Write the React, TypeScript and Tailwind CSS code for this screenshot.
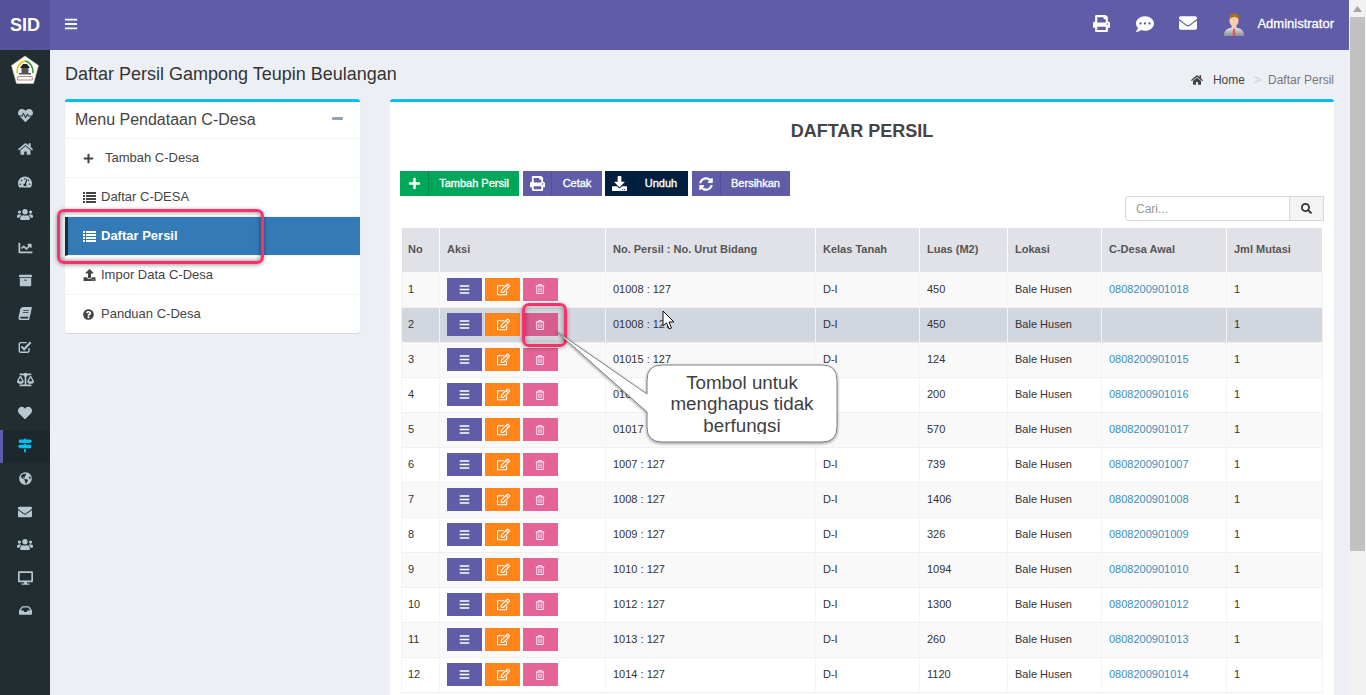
import React from "react";
import {
  FaHeartbeat, FaHome, FaTachometerAlt, FaUsers, FaChartLine, FaArchive, FaBook,
  FaBalanceScale, FaHeart, FaMapSigns, FaGlobeAmericas, FaEnvelope, FaDesktop, FaInbox, FaPlus,
  FaUpload, FaQuestionCircle, FaPrint, FaDownload, FaSyncAlt, FaBars, FaRegEdit, FaRegTrashAlt, FaSearch, FaCommentDots,
} from "react-icons/fa";

function CheckSquare({ className }: { className?: string }) {
  return (
    <svg viewBox="0 0 16 16" className={className}>
      <path d="M12.5 9 V12.5 A1.5 1.5 0 0 1 11 14 H3 A1.5 1.5 0 0 1 1.5 12.5 V4.5 A1.5 1.5 0 0 1 3 3 H10" fill="none" stroke="currentColor" strokeWidth="1.6" />
      <path d="M4 7.5 L7 10.5 L14.5 2.5" fill="none" stroke="currentColor" strokeWidth="2.4" />
    </svg>
  );
}

function ListIcon() {
  return (
    <svg width="13" height="11" viewBox="0 0 13 11" fill="currentColor">
      <rect x="0" y="0" width="2" height="2" /><rect x="3" y="0" width="10" height="2" />
      <rect x="0" y="3" width="2" height="2" /><rect x="3" y="3" width="10" height="2" />
      <rect x="0" y="6" width="2" height="2" /><rect x="3" y="6" width="10" height="2" />
      <rect x="0" y="9" width="2" height="2" /><rect x="3" y="9" width="10" height="2" />
    </svg>
  );
}

const side: { I: React.ComponentType<{ className?: string }>; c: string }[] = [
  { I: FaHeartbeat, c: "h-[15px] w-[15px]" },
  { I: FaHome, c: "h-[14px] w-[15px]" },
  { I: FaTachometerAlt, c: "h-[14px] w-[14px]" },
  { I: FaUsers, c: "h-[15px] w-[16px]" },
  { I: FaChartLine, c: "h-[14px] w-[15px]" },
  { I: FaArchive, c: "h-[13px] w-[13px]" },
  { I: FaBook, c: "h-[13px] w-[12px] -skew-x-12" },
  { I: CheckSquare, c: "h-[14px] w-[14px]" },
  { I: FaBalanceScale, c: "h-[15px] w-[17px]" },
  { I: FaHeart, c: "h-[14px] w-[14px]" },
  { I: FaMapSigns, c: "h-[15px] w-[14px]" },
  { I: FaGlobeAmericas, c: "h-[13px] w-[13px]" },
  { I: FaEnvelope, c: "h-[14px] w-[14px]" },
  { I: FaUsers, c: "h-[15px] w-[16px]" },
  { I: FaDesktop, c: "h-[14px] w-[15px]" },
  { I: FaInbox, c: "h-[13px] w-[13px]" },
];

const rows: [string, string, string, string][] = [
  ["1", "01008 : 127", "450", "0808200901018"],
  ["2", "01008 : 127", "450", ""],
  ["3", "01015 : 127", "124", "0808200901015"],
  ["4", "01016 : 127", "200", "0808200901016"],
  ["5", "01017 : 127", "570", "0808200901017"],
  ["6", "1007 : 127", "739", "0808200901007"],
  ["7", "1008 : 127", "1406", "0808200901008"],
  ["8", "1009 : 127", "326", "0808200901009"],
  ["9", "1010 : 127", "1094", "0808200901010"],
  ["10", "1012 : 127", "1300", "0808200901012"],
  ["11", "1013 : 127", "260", "0808200901013"],
  ["12", "1014 : 127", "1120", "0808200901014"],
];

function Logo() {
  return (
    <svg width="30" height="30" viewBox="0 0 30 30">
      <path d="M15 1 L28.5 10.5 L23.5 28.5 L6.5 28.5 L1.5 10.5 Z" fill="#fff" />
      <path d="M7 18 A9 11 0 0 1 15 6" fill="none" stroke="#e8c416" strokeWidth="1.6" />
      <path d="M23 18 A9 11 0 0 0 15 6" fill="none" stroke="#3a9a3a" strokeWidth="1.6" />
      <path d="M13 9 h4 l3 4 h-10 z" fill="#222" />
      <rect x="11.5" y="13" width="7" height="5" fill="#555" />
      <rect x="9" y="18" width="12" height="1.5" fill="#555" />
      <path d="M8 21.5 L7.5 25 H22.5 L22 21.5 Z" fill="#fff" stroke="#a55" strokeWidth="0.7" />
      <path d="M15 1 L28.5 10.5 L23.5 28.5 L6.5 28.5 L1.5 10.5 Z" fill="none" stroke="#c9c9a0" strokeWidth="0.6" />
    </svg>
  );
}

function Avatar() {
  return (
    <svg width="22" height="26" viewBox="0 0 24 26">
      <defs>
        <linearGradient id="suit" x1="0" y1="0" x2="0" y2="1">
          <stop offset="0" stopColor="#e8e8e8" />
          <stop offset="1" stopColor="#8d8d95" />
        </linearGradient>
      </defs>
      <path d="M1 25 C1 18 6 16 12 15.5 C18 16 23 18 23 25 Z" fill="url(#suit)" />
      <path d="M9 15 L12 19 L15 15 L14 13 H10 Z" fill="#f6cfae" />
      <ellipse cx="12" cy="8" rx="5" ry="6.5" fill="#f6cfae" />
      <path d="M6.5 8 C5.5 1 12 -1 15.5 1 C18 2.5 18 6 17.3 8 C16.5 5 14 4 11 4.5 C8.5 5 7.5 6 6.5 8 Z" fill="#a9701f" />
      <path d="M11 17 H13 L13.7 25 H10.3 Z" fill="#e4556a" />
    </svg>
  );
}

function Cursor() {
  return (
    <svg width="14" height="21" viewBox="0 0 14 21">
      <path d="M1 1 V16 L4.5 12.8 L7 19 L9.5 18 L7 12 H12 Z" fill="#fff" stroke="#111" strokeWidth="1" />
    </svg>
  );
}

function ToolBtn({ icon, label, bg, line, w }: { icon: React.ReactNode; label: string; bg: string; line: string; w: string }) {
  return (
    <div className={`flex h-[25px] items-stretch text-white ${bg} ${w}`}>
      <div className={`flex w-[29px] items-center justify-center border-r ${line}`}>{icon}</div>
      <div className="flex flex-1 items-center justify-center text-[11px] [-webkit-text-stroke:0.35px]">{label}</div>
    </div>
  );
}

function MenuItem({ icon, label, active, last, gap }: { icon: React.ReactNode; label: string; active?: boolean; last?: boolean; gap?: string }) {
  return (
    <div className={`flex items-center ${last ? "h-[38px]" : "h-[39px] border-b border-[#f4f4f4]"} ${active ? "border-l-[3px] border-l-[#1f2b34] bg-[#337ab7] pl-[15px] font-bold text-white" : "pl-[18px] text-[#444]"} ${gap ?? "gap-[5px]"}`}>
      {icon}
      <span>{label}</span>
    </div>
  );
}

export default function App() {
  return (
    <div className="relative flex h-[695px] w-[1366px] overflow-hidden font-['Liberation_Sans',Arial,sans-serif] text-[#333]">
      <div className="flex w-[1349px] shrink-0 flex-col bg-[#ecf0f5]">
        <header className="flex h-[50px] shrink-0 bg-[#605ca8] text-white">
          <div className="flex w-[50px] items-center justify-center bg-[#555299] text-[18px] font-bold">SID</div>
          <div className="flex w-[41px] items-center justify-center pb-[3px]"><FaBars className="h-[14px] w-[14px]" /></div>
          <div className="flex flex-1 items-center justify-end pr-[15px]">
            <FaPrint className="mb-1 h-[17px] w-[17px]" />
            <FaCommentDots className="mb-0.5 ml-[26px] h-[18px] w-[18px]" />
            <FaEnvelope className="mb-1 ml-[25px] h-[18px] w-[18px]" />
            <div className="ml-[26px]"><Avatar /></div>
            <span className="ml-[12px] mb-0.5 text-[13px] [-webkit-text-stroke:0.3px]">Administrator</span>
          </div>
        </header>

        <div className="flex min-h-0 flex-1">
          <aside className="flex w-[50px] shrink-0 flex-col bg-[#222d32] text-[#b8c7ce]">
            <div className="flex h-[50px] shrink-0 items-start justify-center pt-[5px]"><Logo /></div>
            {side.map(({ I, c }, i) => (
              <div key={i} className={`flex h-[33px] shrink-0 items-center justify-center pb-[2px] ${i === 10 ? "border-l-[3px] border-[#605ca8] bg-[#1e282c] pr-[3px] text-[#00c0ef]" : ""}`}>
                <I className={c} />
              </div>
            ))}
          </aside>

          <main className="min-w-0 flex-1 overflow-hidden pl-[15px] pr-[15px]">
            <div className="flex h-[49px] justify-between">
              <h1 className="pt-[13px] text-[18px] leading-[22px] text-[#333]">Daftar Persil Gampong Teupin Beulangan</h1>
              <div className="flex items-start gap-[7px] pt-[23px] text-[12px] leading-[14px]">
                <FaHome className="mr-[3px] mt-[1px] h-[12px] w-[12px] text-[#444]" />
                <span className="text-[#444]">Home</span>
                <span className="pl-[2px] text-[#ccc]">&gt;</span>
                <span className="text-[#777]">Daftar Persil</span>
              </div>
            </div>

            <div className="flex items-start gap-[30px]">
              <section className="w-[295px] shrink-0 rounded-[3px] border-t-[3px] border-[#00c0ef] bg-white text-[13px] shadow-[0_1px_1px_rgba(0,0,0,0.1)]">
                <div className="flex h-[37px] items-center justify-between border-b border-[#f4f4f4] pl-[10px] pr-[17px] text-[16px] text-[#444]">
                  <span>Menu Pendataan C-Desa</span>
                  <div className="mb-[3px] h-[3px] w-[11px] rounded-[1px] bg-[#97a0b3]" />
                </div>
                <MenuItem icon={<FaPlus className="h-[11px] w-[11px] text-[#444]" />} label="Tambah C-Desa" gap="gap-[11px]" />
                <MenuItem icon={<ListIcon />} label="Daftar C-DESA" />
                <MenuItem icon={<ListIcon />} label="Daftar Persil" active />
                <MenuItem icon={<FaUpload className="h-[12px] w-[13px]" />} label="Impor Data C-Desa" />
                <MenuItem icon={<FaQuestionCircle className="h-[11px] w-[11px]" />} label="Panduan C-Desa" last gap="gap-[7px]" />
              </section>

              <section className="h-[600px] min-w-0 flex-1 rounded-t-[3px] border-t-[3px] border-[#00c0ef] bg-white px-[10px]">
                <h2 className="pt-[19px] text-center text-[18px] font-bold leading-[20px] text-[#444]">DAFTAR PERSIL</h2>
                <div className="mt-[30px] flex">
                  <ToolBtn icon={<FaPlus className="h-[13px] w-[13px]" />} label="Tambah Persil" bg="bg-[#00a65a]" line="border-[#008d4c]" w="w-[119px]" />
                  <div className="ml-[4px]"><ToolBtn icon={<FaPrint className="h-[15px] w-[15px]" />} label="Cetak" bg="bg-[#605ca8]" line="border-[#555299]" w="w-[79px]" /></div>
                  <div className="ml-[3px]"><ToolBtn icon={<FaDownload className="h-[15px] w-[15px]" />} label="Unduh" bg="bg-[#001f3f]" line="border-[#001a35]" w="w-[83px]" /></div>
                  <div className="ml-[4px]"><ToolBtn icon={<FaSyncAlt className="h-[14px] w-[14px]" />} label="Bersihkan" bg="bg-[#605ca8]" line="border-[#555299]" w="w-[98px]" /></div>
                </div>
                <div className="flex justify-end">
                  <div className="flex h-[25px] w-[199px]">
                    <div className="flex flex-1 items-center rounded-l-[3px] border border-[#d2d6de] bg-white pl-[10px] text-[12px] text-[#999]">Cari...</div>
                    <div className="flex w-[34px] items-center justify-center border-y border-r border-[#d2d6de] bg-[#f4f4f4] text-[#333]"><FaSearch className="h-[11px] w-[11px]" /></div>
                  </div>
                </div>

                <table className="mt-[7px] ml-[1px] w-[921px] table-fixed border-collapse text-[11px]">
                  <colgroup>
                    <col className="w-[38px]" /><col className="w-[166px]" /><col className="w-[210px]" /><col className="w-[104px]" /><col className="w-[88px]" /><col className="w-[94px]" /><col className="w-[125px]" /><col className="w-[96px]" />
                  </colgroup>
                  <thead>
                    <tr className="h-[44px] bg-[#e1e2e7] text-left font-bold text-[#555] [&>th]:border-x [&>th]:border-white [&>th]:px-[7px] [&>th]:pb-[2px] [&>th:first-child]:pl-[6px]">
                      <th>No</th><th>Aksi</th><th>No. Persil : No. Urut Bidang</th><th>Kelas Tanah</th><th>Luas (M2)</th><th>Lokasi</th><th>C-Desa Awal</th><th>Jml Mutasi</th>
                    </tr>
                  </thead>
                  <tbody>
                    {rows.map((r, i) => (
                      <tr key={r[0]} className={`h-[35px] border-b border-[#f0f0f0] [&>td]:border-x [&>td]:border-[#f4f4f4] [&>td]:px-[7px] [&>td:first-child]:pl-[6px] ${i === 1 ? "bg-[#d2d6de] [&>td]:border-[#eceef2]" : i % 2 === 0 ? "bg-[#f9f9f9]" : "bg-white"}`}>
                        <td>{r[0]}</td>
                        <td>
                          <div className="flex gap-[3px]">
                            <div className="flex h-[23px] w-[35px] items-center justify-center bg-[#605ca8] text-white"><FaBars className="h-[11px] w-[11px]" /></div>
                            <div className="flex h-[23px] w-[35px] items-center justify-center bg-[#ff851b] pl-px text-white"><FaRegEdit className="h-[13px] w-[13px]" /></div>
                            <div className={`flex h-[23px] w-[35px] items-center justify-center pr-px text-white ${i === 1 ? "bg-[#d65d8d]" : "bg-[#e56497]"}`}><FaRegTrashAlt className="h-[10px] w-[10px] opacity-90" /></div>
                          </div>
                        </td>
                        <td>{r[1]}</td>
                        <td>D-I</td>
                        <td>{r[2]}</td>
                        <td>Bale Husen</td>
                        <td className="text-[#3c8dbc]">{r[3]}</td>
                        <td>1</td>
                      </tr>
                    ))}
                  </tbody>
                </table>
              </section>
            </div>
          </main>
        </div>
      </div>

      <div className="flex w-[17px] shrink-0 flex-col bg-[#f1f1f1]">
        <div className="flex h-[17px] items-center justify-center text-[#a3a3a3]">
          <svg width="9" height="6" viewBox="0 0 9 6"><path d="M4.5 0 L9 6 H0 Z" fill="currentColor" /></svg>
        </div>
        <div className="ml-[1px] h-[534px] w-[15px] bg-[#c1c1c1]" />
      </div>

      {/* annotations over the page */}
      <div className="absolute left-[57px] top-[209px] h-[55px] w-[207px] rounded-[7px] border-[3px] border-[#f9306b] shadow-[0_1px_4px_rgba(0,0,0,0.4),inset_0_0_5px_rgba(0,0,0,0.55)]" />
      <div className="absolute left-[522px] top-[303px] h-[44px] w-[45px] rounded-[7px] border-[3px] border-[#f9306b] shadow-[0_1px_4px_rgba(0,0,0,0.35),inset_0_0_5px_rgba(0,0,0,0.45)]" />
      <div className="absolute left-[662px] top-[310px]"><Cursor /></div>
      <svg className="absolute left-[550px] top-[325px]" width="300" height="125" viewBox="550 325 300 125">
        <defs>
          <filter id="cs" x="-10%" y="-10%" width="120%" height="120%">
            <feDropShadow dx="0" dy="1" stdDeviation="1.5" floodColor="#000" floodOpacity="0.45" />
          </filter>
        </defs>
        <path d="M556 331 L647 394 V380 Q647 365 662 365 H822 Q837 365 837 380 V427 Q837 442 822 442 H662 Q647 442 647 427 V412 Z" fill="#fff" stroke="#808080" strokeWidth="1" filter="url(#cs)" />
      </svg>
      <div className="absolute left-[647px] top-[372px] flex h-[62px] w-[190px] flex-col items-center overflow-hidden text-center text-[18.8px] leading-[21.4px] text-[#404040]">
        <span>Tombol untuk</span>
        <span>menghapus tidak</span>
        <span>berfungsi</span>
      </div>
    </div>
  );
}
